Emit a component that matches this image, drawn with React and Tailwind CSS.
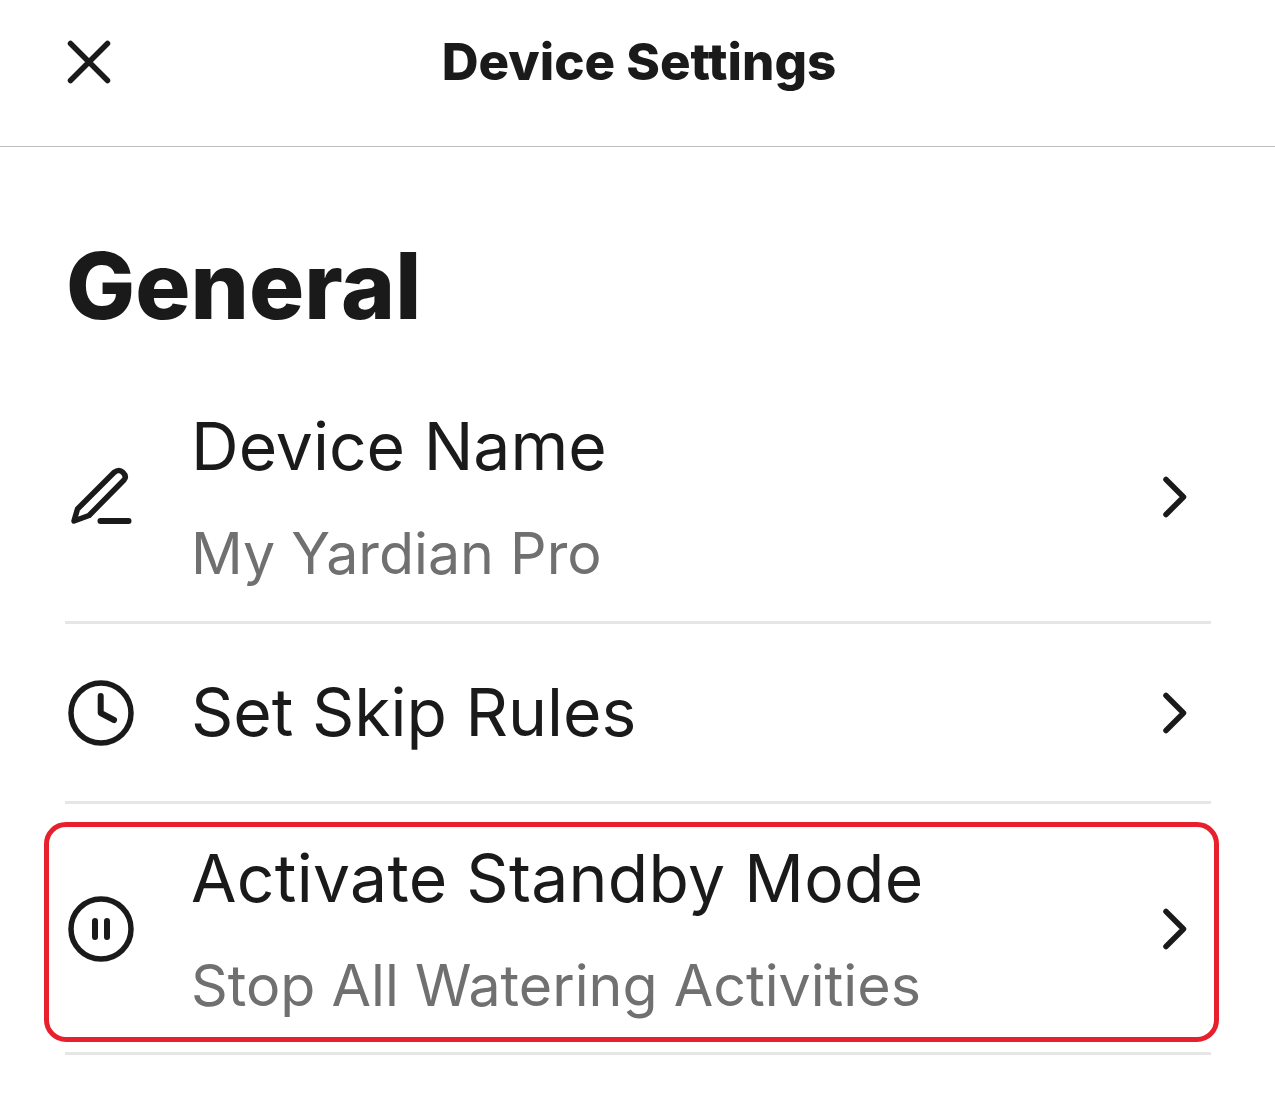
import React from "react";

const Chevron = () => (
  <svg width="26" height="44" viewBox="0 0 26 44" fill="none" stroke="#1a1a1a" strokeWidth="5.5" strokeLinecap="round" strokeLinejoin="round">
    <path d="M4 4.5 L21.5 22 L4 39.5" />
  </svg>
);

const Pencil = () => (
  <svg width="64" height="64" viewBox="0 0 64 64" fill="none" stroke="#1a1a1a" strokeWidth="5.5" strokeLinecap="round" strokeLinejoin="round">
    <path d="M6 56 L9.5 44 L46 7.5 Q51 3.5 55 7.5 Q59 11.5 56 15 L21 50.5 Z" />
    <path d="M32.5 56 H60.5" strokeWidth="6" />
  </svg>
);

const Clock = () => (
  <svg width="66" height="66" viewBox="0 0 66 66" fill="none" stroke="#1a1a1a" strokeWidth="5.5" strokeLinecap="round" strokeLinejoin="round">
    <circle cx="33" cy="33" r="30" />
    <path d="M32.7 16 V33 L46 40" strokeWidth="6" />
  </svg>
);

const Pause = () => (
  <svg width="66" height="66" viewBox="0 0 66 66" fill="none" stroke="#1a1a1a" strokeWidth="5.5" strokeLinecap="round">
    <circle cx="33" cy="33" r="30" />
    <path d="M27 25 V41 M39 25 V41" strokeWidth="6" />
  </svg>
);

function Row({ icon, title, sub, h, titleClass = "" }) {
  return (
    <div className={`flex items-center ${h} pt-[1px] border-b-[3px] border-[#e6e6e6] pr-[23px]`}>
      <div className="w-[128px] shrink-0 pl-[3px] flex items-center">{icon}</div>
      <div className={`flex-1 flex flex-col -ml-[2px] ${sub ? "pt-[1px]" : "pb-[3px]"}`}>
        <div className={`text-[66px] leading-[80px] text-[#1a1a1a] ${titleClass}`}>{title}</div>
        {sub && <div className="text-[57.3px] leading-[72px] text-[#707070] mt-[31px]">{sub}</div>}
      </div>
      <Chevron />
    </div>
  );
}

export default function App() {
  return (
    <div className="relative w-[1275px] h-[1101px] bg-white overflow-hidden font-['Inter',sans-serif]">
      <div className="h-[147px] border-b border-[#bdbdbd] flex items-center justify-center relative">
        <svg className="absolute left-[67px] top-[40px]" width="44" height="44" viewBox="0 0 44 44" fill="none" stroke="#1a1a1a" strokeWidth="5.5" strokeLinecap="round">
          <path d="M3.5 3.5 L40.5 40.5 M40.5 3.5 L3.5 40.5" />
        </svg>
        <div className="text-[51px] leading-[62px] font-extrabold text-[#1a1a1a] pl-[3px] pb-[23px]">Device Settings</div>
      </div>
      <div className="pl-[65px] pr-[64px]">
        <div className="h-[225px] flex items-center pt-[52px] pl-[1px]">
          <h1 className="text-[92px] leading-[110px] font-extrabold text-[#1a1a1a]">General</h1>
        </div>
        <Row h="h-[252px]" icon={<Pencil />} title="Device Name" sub="My Yardian Pro" />
        <Row h="h-[180px]" icon={<Clock />} title="Set Skip Rules" />
        <Row h="h-[251px]" icon={<Pause />} title="Activate Standby Mode" titleClass="tracking-[0.3px]" sub="Stop All Watering Activities" />
      </div>
      <div className="absolute left-[44px] top-[822px] w-[1175px] h-[220px] border-[5px] border-[#e8202e] rounded-[22px]" />
    </div>
  );
}
